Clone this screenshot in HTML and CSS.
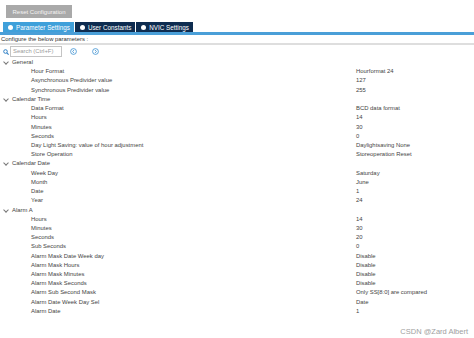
FILE: index.html
```html
<!DOCTYPE html>
<html lang="en">
<head>
    <meta charset="UTF-8">
    <title>RTC Configuration</title>
    <link rel="stylesheet" href="styles.css">
</head>
<body>
    <div class="toolbar">
        <button class="reset">Reset Configuration</button>
    </div>
    <div class="tabs">
        <div class="tab active"><span class="dot"></span>Parameter Settings</div>
        <div class="tab"><span class="dot"></span>User Constants</div>
        <div class="tab"><span class="dot"></span>NVIC Settings</div>
    </div>
    <div class="hint">Configure the below parameters :</div>
    <div class="search-row">
        <svg class="mag" width="6" height="6" viewBox="0 0 6 6"><circle cx="2.5" cy="2.5" r="1.8" fill="none" stroke="#2f7fc4" stroke-width="1"/><line x1="3.8" y1="3.8" x2="5.6" y2="5.6" stroke="#2f7fc4" stroke-width="1.1"/></svg>
        <div class="search">Search (Ctrl+F)</div>
        <svg class="nav" width="7" height="7" viewBox="0 0 7 7"><circle cx="3.5" cy="3.5" r="2.9" fill="none" stroke="#3a8fd0" stroke-width="0.8"/><path d="M4 2 L2.6 3.5 L4 5" fill="none" stroke="#3a8fd0" stroke-width="0.8"/></svg>
        <svg class="nav" width="7" height="7" viewBox="0 0 7 7"><circle cx="3.5" cy="3.5" r="2.9" fill="none" stroke="#3a8fd0" stroke-width="0.8"/><path d="M3 2 L4.4 3.5 L3 5" fill="none" stroke="#3a8fd0" stroke-width="0.8"/></svg>
    </div>

    <div class="tree">
        <div class="group"><span class="chev"></span>General</div>
        <div class="row"><span>Hour Format</span><span>Hourformat 24</span></div>
        <div class="row"><span>Asynchronous Predivider value</span><span>127</span></div>
        <div class="row"><span>Synchronous Predivider value</span><span>255</span></div>

        <div class="group"><span class="chev"></span>Calendar Time</div>
        <div class="row"><span>Data Format</span><span>BCD data format</span></div>
        <div class="row"><span>Hours</span><span>14</span></div>
        <div class="row"><span>Minutes</span><span>30</span></div>
        <div class="row"><span>Seconds</span><span>0</span></div>
        <div class="row"><span>Day Light Saving: value of hour adjustment</span><span>Daylightsaving None</span></div>
        <div class="row"><span>Store Operation</span><span>Storeoperation Reset</span></div>

        <div class="group"><span class="chev"></span>Calendar Date</div>
        <div class="row"><span>Week Day</span><span>Saturday</span></div>
        <div class="row"><span>Month</span><span>June</span></div>
        <div class="row"><span>Date</span><span>1</span></div>
        <div class="row"><span>Year</span><span>24</span></div>

        <div class="group"><span class="chev"></span>Alarm A</div>
        <div class="row"><span>Hours</span><span>14</span></div>
        <div class="row"><span>Minutes</span><span>30</span></div>
        <div class="row"><span>Seconds</span><span>20</span></div>
        <div class="row"><span>Sub Seconds</span><span>0</span></div>
        <div class="row"><span>Alarm Mask Date Week day</span><span>Disable</span></div>
        <div class="row"><span>Alarm Mask Hours</span><span>Disable</span></div>
        <div class="row"><span>Alarm Mask Minutes</span><span>Disable</span></div>
        <div class="row"><span>Alarm Mask Seconds</span><span>Disable</span></div>
        <div class="row"><span>Alarm Sub Second Mask</span><span>Only SS[8:0] are compared</span></div>
        <div class="row"><span>Alarm Date Week Day Sel</span><span>Date</span></div>
        <div class="row"><span>Alarm Date</span><span>1</span></div>
    </div>

    <div class="footer">CSDN @Zard Albert</div>
</body>
</html>
```

FILE: styles.css
```css
body {
    margin: 0;
    background: #ffffff;
    color: #444444;
    font-family: "Liberation Sans", Arial, sans-serif;
    font-size: 5.9px;
}
.toolbar {
    padding: 5px 0 0 6px;
    height: 16px;
    box-sizing: border-box;
}
.reset {
    width: 66px;
    height: 13px;
    border: none;
    background: #a9a9a9;
    color: #f4f4f4;
    font-family: inherit;
    font-size: 6px;
    padding: 0;
    display: block;
}
.tabs {
    display: flex;
    padding-left: 3px;
    margin-top: 6px;
    border-bottom: 3px solid #4a9fd8;
}
.tab {
    box-sizing: border-box;
    height: 10px;
    display: flex;
    align-items: center;
    padding: 0 4px 0 5px;
    background: #0e2c50;
    color: #ffffff;
    margin-right: 1px;
    white-space: nowrap;
    font-size: 6.3px;
}
.tab.active {
    background: #3fa0da;
    min-width: 68px;
}
.tab:nth-child(2) {
    min-width: 60px;
}
.tab:nth-child(3) {
    min-width: 55px;
}
.dot {
    width: 5px;
    height: 5px;
    border-radius: 50%;
    background: #ffffff;
    margin-right: 3px;
    flex: none;
}
.hint {
    height: 8px;
    line-height: 8px;
    padding-left: 1px;
    border-bottom: 2px solid #dedede;
    color: #333;
}
.search-row {
    display: flex;
    align-items: center;
    height: 11px;
    margin-top: 1px;
    padding-left: 3px;
}
.mag {
    margin-right: 1px;
}
.search {
    width: 48px;
    height: 9px;
    line-height: 9px;
    border: 1px solid #c4c4c4;
    padding-left: 2px;
    color: #9a9a9a;
    margin-right: 8px;
    white-space: nowrap;
    overflow: hidden;
}
.nav {
    margin-right: 15px;
}
.tree {
    margin-top: 1px;
}
.group, .row {
    height: 9.22px;
    line-height: 9.22px;
    display: flex;
    white-space: nowrap;
}
.group {
    padding-left: 12px;
    position: relative;
}
.chev {
    position: absolute;
    left: 4px;
    top: 2px;
    width: 3px;
    height: 3px;
    border-right: 1px solid #777;
    border-bottom: 1px solid #777;
    transform: rotate(45deg);
}
.row {
    padding-left: 31px;
}
.row span:first-child {
    width: 325px;
}
.footer {
    text-align: right;
    padding-right: 6px;
    margin-top: 11px;
    color: #a0a0a0;
    font-size: 7.5px;
}
```
